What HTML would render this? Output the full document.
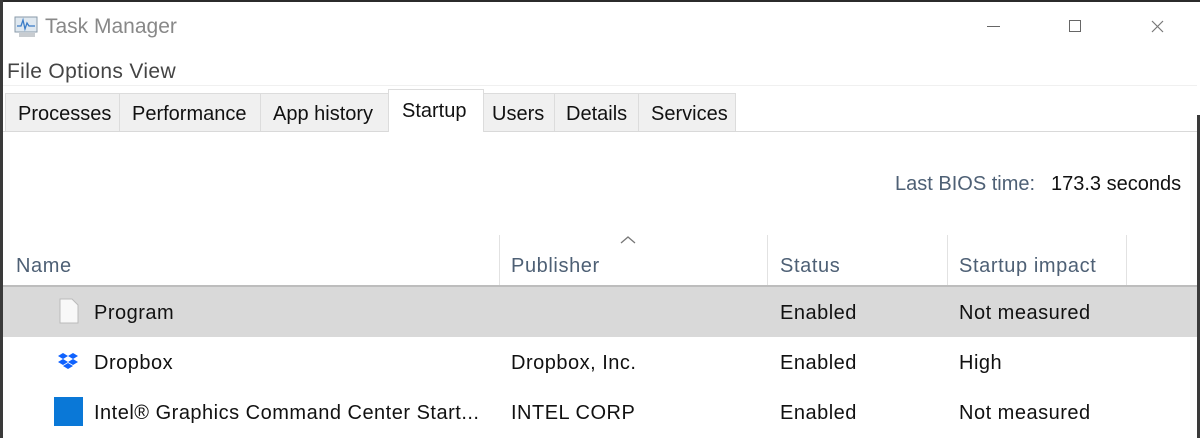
<!DOCTYPE html>
<html><head><style>
*{margin:0;padding:0;box-sizing:border-box}
body{width:1200px;height:438px;overflow:hidden;background:#fff;font-family:"Liberation Sans",sans-serif;position:relative;color:#1a1a1a}
.a{position:absolute;white-space:nowrap}
.tab{position:absolute;top:93px;height:38px;background:#f0f0f0;border:1px solid #dcdcdc;border-bottom:none;font-size:20px;line-height:40px;padding-left:12px;color:#111}
.hd{color:#4e6075;font-size:20px;letter-spacing:.6px}
.sep{position:absolute;top:235px;width:1px;height:51px;background:#e2e2e2}
.r{font-size:20px;color:#111;letter-spacing:.5px}
</style></head><body>
<div class="a" style="left:0;top:0;width:1200px;height:2px;background:#2b2b2b"></div>
<div class="a" style="left:0;top:0;width:3px;height:438px;background:#3a3a3a"></div>
<div class="a" style="left:1197px;top:115px;width:3px;height:323px;background:#3a3a3a"></div>
<svg class="a" style="left:13px;top:15px" width="28" height="24" viewBox="0 0 28 24"><rect x="2" y="2" width="22" height="15" fill="#dfe8f0" stroke="#8a9aa8"/><polyline points="4,11 8,11 10,5 12,14 14,8 16,11 22,11" fill="none" stroke="#3a7cc7" stroke-width="1.3"/><rect x="6" y="18" width="16" height="4" fill="#c8ccd0"/></svg>
<div class="a" style="left:45px;top:15px;font-size:21px;color:#888">Task Manager</div>
<div class="a" style="left:987px;top:26px;width:13px;height:1px;background:#666"></div>
<div class="a" style="left:1069px;top:20px;width:12px;height:12px;border:1px solid #666"></div>
<svg class="a" style="left:1151px;top:20px" width="13" height="13"><path d="M1 1L12 12M12 1L1 12" stroke="#777" stroke-width="1.2"/></svg>
<div class="a" style="left:7px;top:60px;font-size:21px;color:#444;letter-spacing:.35px">File Options View</div>
<div class="a" style="left:3px;top:85px;width:1194px;height:1px;background:#f0f0f0"></div>
<div class="tab" style="left:5px;width:115px">Processes</div>
<div class="tab" style="left:119px;width:142px">Performance</div>
<div class="tab" style="left:260px;width:129px">App history</div>
<div class="tab" style="left:483px;width:72px;padding-left:8px">Users</div>
<div class="tab" style="left:554px;width:85px;padding-left:11px">Details</div>
<div class="tab" style="left:638px;width:98px;padding-left:12px">Services</div>
<div class="a" style="left:3px;top:131px;width:1194px;height:1px;background:#d9d9d9"></div>
<div class="tab" style="left:388px;top:89px;height:43px;width:96px;background:#fff;line-height:42px;padding-left:13px">Startup</div>
<div class="a" style="left:895px;top:173px;font-size:20px;color:#4e6075">Last BIOS time:</div>
<div class="a" style="left:1051px;top:173px;font-size:20px;color:#111">173.3 seconds</div>
<div class="sep" style="left:499px"></div><div class="sep" style="left:767px"></div><div class="sep" style="left:947px"></div><div class="sep" style="left:1126px"></div>
<svg class="a" style="left:619px;top:235px" width="18" height="10"><polyline points="2,8 9,2 16,8" fill="none" stroke="#777" stroke-width="1.3"/></svg>
<div class="a hd" style="left:16px;top:255px">Name</div>
<div class="a hd" style="left:511px;top:255px">Publisher</div>
<div class="a hd" style="left:780px;top:255px">Status</div>
<div class="a hd" style="left:959px;top:255px">Startup impact</div>
<div class="a" style="left:3px;top:285px;width:1194px;height:2px;background:#bdbdbd"></div>
<div class="a" style="left:3px;top:287px;width:1194px;height:50px;background:#d9d9d9"></div>
<svg class="a" style="left:59px;top:298px" width="20" height="26"><path d="M1 1H13L19 7V25H1Z" fill="#f8f8f8" stroke="#bbb"/></svg>
<svg class="a" style="left:58px;top:353px" width="20" height="18" viewBox="0 0 20 18"><g fill="#0f62fe"><path d="M5 0L10 3L5 6L0 3Z"/><path d="M15 0L20 3L15 6L10 3Z"/><path d="M5 6L10 9L5 12L0 9Z"/><path d="M15 6L20 9L15 12L10 9Z"/><path d="M10 10L15 13L10 16L5 13Z"/></g></svg>
<div class="a" style="left:54px;top:397px;width:29px;height:29px;background:#0a78d7"></div>
<div class="a r" style="left:94px;top:302px">Program</div>
<div class="a r" style="left:780px;top:302px">Enabled</div>
<div class="a r" style="left:959px;top:302px">Not measured</div>
<div class="a r" style="left:94px;top:352px">Dropbox</div>
<div class="a r" style="left:511px;top:352px">Dropbox, Inc.</div>
<div class="a r" style="left:780px;top:352px">Enabled</div>
<div class="a r" style="left:959px;top:352px">High</div>
<div class="a r" style="left:94px;top:402px">Intel® Graphics Command Center Start...</div>
<div class="a r" style="left:511px;top:402px">INTEL CORP</div>
<div class="a r" style="left:780px;top:402px">Enabled</div>
<div class="a r" style="left:959px;top:402px">Not measured</div>
</body></html>
